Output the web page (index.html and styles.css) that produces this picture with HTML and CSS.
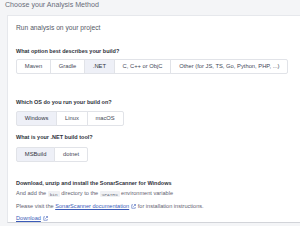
FILE: index.html
```html
<!DOCTYPE html>
<html>
<head>
<meta charset="utf-8">
<link rel="stylesheet" href="styles.css">
</head>
<body>
<h2 class="title">Choose your Analysis Method</h2>
<section class="card">
  <p class="lead">Run analysis on your project</p>

  <p class="question q1">What option best describes your build?</p>
  <div class="group g1">
    <button class="opt">Maven</button>
    <button class="opt">Gradle</button>
    <button class="opt selected">.NET</button>
    <button class="opt">C, C++ or ObjC</button>
    <button class="opt">Other (for JS, TS, Go, Python, PHP, ...)</button>
  </div>

  <p class="question q2">Which OS do you run your build on?</p>
  <div class="group g2">
    <button class="opt selected">Windows</button>
    <button class="opt">Linux</button>
    <button class="opt">macOS</button>
  </div>

  <p class="question q3">What is your .NET build tool?</p>
  <div class="group g3">
    <button class="opt selected">MSBuild</button>
    <button class="opt">dotnet</button>
  </div>

  <p class="question q4">Download, unzip and install the SonarScanner for Windows</p>
  <p class="line">And add the <code class="code">bin</code> directory to the <code class="code">%PATH%</code> environment variable</p>
  <p class="line">Please visit the <a class="link" href="#">SonarScanner documentation<svg class="ext" viewBox="0 0 10 10" width="5" height="5"><path d="M4 1.5H1.5v7h7V6" fill="none" stroke="currentColor" stroke-width="1.1"/><path d="M6 1h3v3M9 1L4.5 5.5" fill="none" stroke="currentColor" stroke-width="1.1"/></svg></a> for installation instructions.</p>
  <p class="line last"><a class="link" href="#">Download<svg class="ext" viewBox="0 0 10 10" width="5" height="5"><path d="M4 1.5H1.5v7h7V6" fill="none" stroke="currentColor" stroke-width="1.1"/><path d="M6 1h3v3M9 1L4.5 5.5" fill="none" stroke="currentColor" stroke-width="1.1"/></svg></a></p>
</section>
</body>
</html>
```

FILE: styles.css
```css
html, body {
  margin: 0;
  padding: 0;
  height: 226px;
  overflow: hidden;
}
body {
  background: #f4f5f7;
  font-family: "Liberation Sans", Arial, sans-serif;
  color: #3d4150;
}
.title {
  margin: 0;
  padding-left: 5px;
  height: 10px;
  line-height: 10px;
  font-size: 7.1px;
  font-weight: normal;
  color: #696d7a;
}
.card {
  margin: 5px 0 0 7px;
  background: #ffffff;
  border: 1px solid #e6e8ec;
  border-right: none;
  border-bottom-color: #d2d4d9;
  padding: 7px 0 0 8px;
}
.card p {
  margin: 0;
}
.lead {
  font-size: 6.7px;
  line-height: 10px;
  color: #555967;
}
.question {
  font-size: 5.5px;
  line-height: 8px;
  font-weight: bold;
  color: #2e313b;
}
.q1 { margin-top: 14px !important; }
.q2 { margin-top: 24px !important; }
.q3 { margin-top: 7px !important; }
.q4 { margin-top: 17px !important; }
.group {
  display: flex;
}
.g1 { margin-top: 4px; }
.g2 { margin-top: 5px; }
.g3 { margin-top: 6px; }
.opt {
  height: 15px;
  box-sizing: border-box;
  border: 1px solid #e1e3e8;
  background: #ffffff;
  padding: 0 7.8px;
  margin: 0 0 0 -1px;
  font-family: "Liberation Sans", Arial, sans-serif;
  font-size: 5.8px;
  line-height: 13px;
  color: #444857;
  border-radius: 0;
}
.opt:first-child {
  margin-left: 0;
  border-radius: 2px 0 0 2px;
}
.opt:last-child {
  border-radius: 0 2px 2px 0;
}
.opt.selected {
  background: #eef0f7;
  color: #2f3342;
}
.line {
  font-size: 5.6px;
  line-height: 12px;
  color: #5f6371;
}
.line.last {
  line-height: 8px;
  margin-top: 2px !important;
  height: 8px;
}
.code {
  font-family: "Liberation Mono", monospace;
  font-size: 4.4px;
  background: #f0f1f4;
  border-radius: 1px;
  padding: 0.5px 2px;
  color: #6a6e7a;
}
.link {
  color: #3b5bb8;
  text-decoration: underline;
}
.ext {
  margin-left: 2px;
  vertical-align: -0.5px;
}
```
